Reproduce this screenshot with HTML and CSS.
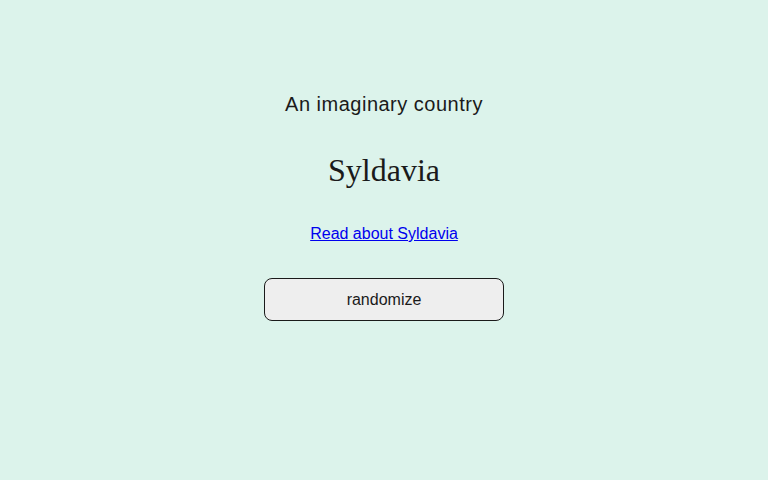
FILE: index.html
```html
<!DOCTYPE html>
<html lang="en">
<head>
	<meta charset="UTF-8">
	<title>Syldavia</title>
	<link rel="stylesheet" href="styles.css">
</head>
<body>
	<div id="main">
		<h2 class="tagline">An imaginary country</h2>
		<h1 class="country">Syldavia</h1>
		<a class="wiki" href="#">Read about Syldavia</a>
		<button class="randomize">randomize</button>
	</div>
</body>
</html>
```

FILE: styles.css
```css
*{
	margin: 0;
	padding: 0;
}
html, body{
	height: 100%;
}
body{
	background: #dcf3eb;
	font-family: "Liberation Sans", Arial, sans-serif;
	color: #1a1a1a;
}
#main{
	display: flex;
	flex-direction: column;
	align-items: center;
	padding-top: 91px;
}
.tagline{
	font-size: 20px;
	font-weight: normal;
	letter-spacing: 0.5px;
	line-height: 26px;
}
.country{
	font-family: "Liberation Serif", "Times New Roman", serif;
	font-size: 32px;
	font-weight: normal;
	line-height: 40px;
	margin-top: 33px;
}
.wiki{
	font-size: 16px;
	line-height: 20px;
	color: #0000ee;
	margin-top: 34px;
}
.randomize{
	margin-top: 34px;
	width: 240px;
	height: 43px;
	background: #eeeeee;
	border: 1px solid #1a1a1a;
	border-radius: 8px;
	font-family: "Liberation Sans", Arial, sans-serif;
	font-size: 16px;
	color: #1a1a1a;
}
```
